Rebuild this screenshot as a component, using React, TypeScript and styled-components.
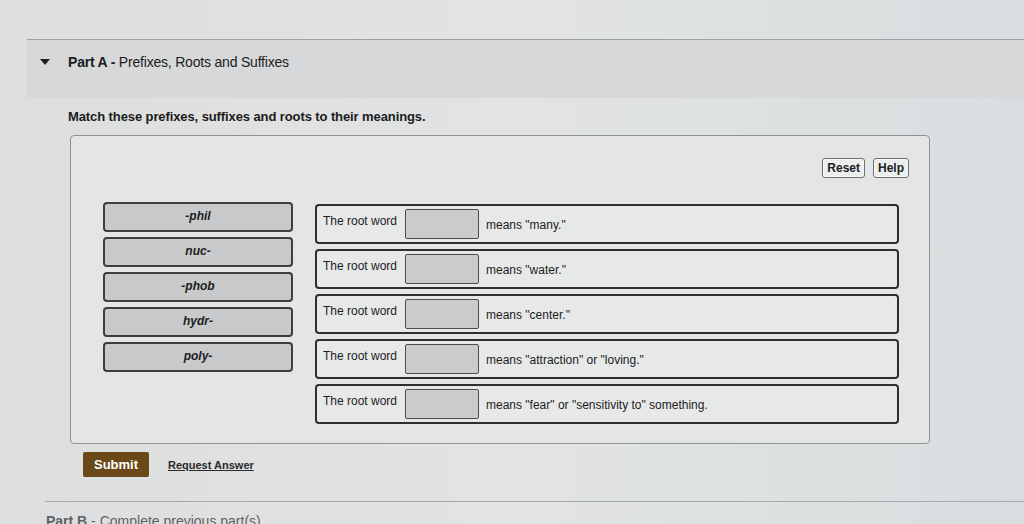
import React from "react";
import styled, { createGlobalStyle } from "styled-components";

const Global = createGlobalStyle`
  html, body { margin: 0; padding: 0; }
  body {
    width: 1024px;
    height: 524px;
    overflow: hidden;
    background: linear-gradient(90deg, #dcdedf 0%, #e2e4e4 50%, #dadddf 100%);
    font-family: "Liberation Sans", Arial, sans-serif;
    color: #1c1c1c;
  }
`;

const Page = styled.div`
  padding-top: 39px;
  display: flex;
  flex-direction: column;
`;

const PartHeader = styled.div`
  margin-left: 27px;
  height: 58px;
  border-top: 1px solid #9ea1a3;
  background: #d6d8d9;
  display: flex;
  align-items: center;
  padding-left: 13px;
  gap: 18px;
`;

const Caret = styled.span`
  width: 0;
  height: 0;
  border-left: 5px solid transparent;
  border-right: 5px solid transparent;
  border-top: 6px solid #1e1e1e;
  margin-top: -14px;
`;

const PartTitle = styled.div`
  font-size: 14px;
  margin-top: -14px;
  letter-spacing: -0.2px;
  b { font-weight: 700; }
`;

const Body = styled.div`
  padding-left: 68px;
  display: flex;
  flex-direction: column;
`;

const Instruction = styled.div`
  margin-top: 11px;
  font-size: 13px;
  font-weight: 700;
  letter-spacing: -0.1px;
`;

const Card = styled.div`
  margin-top: 11px;
  margin-left: 2px;
  width: 860px;
  height: 309px;
  box-sizing: border-box;
  border: 1px solid #8f9293;
  border-radius: 4px;
  background: #e4e6e6;
  padding: 22px 20px 0 32px;
  display: flex;
  flex-direction: column;
`;

const Toolbar = styled.div`
  display: flex;
  justify-content: flex-end;
  gap: 8px;
`;

const SmallButton = styled.button`
  font-family: "Liberation Sans", Arial, sans-serif;
  font-size: 12px;
  font-weight: 700;
  color: #222;
  background: #eceeee;
  border: 1px solid #6d7072;
  border-radius: 3px;
  height: 20px;
  padding: 0 4px;
  box-shadow: inset 0 0 0 1px #f8f8f8;
`;

const Match = styled.div`
  margin-top: 24px;
  display: flex;
  gap: 22px;
`;

const Tiles = styled.div`
  display: flex;
  flex-direction: column;
  gap: 5px;
  width: 190px;
`;

const Tile = styled.div`
  height: 30px;
  box-sizing: border-box;
  border: 2px solid #3e3e3e;
  border-radius: 4px;
  background: #c7c9ca;
  display: flex;
  justify-content: center;
  align-items: flex-start;
  padding-top: 5px;
  font-size: 12px;
  font-weight: 700;
  font-style: italic;
  color: #1d1d1d;
`;

const Rows = styled.div`
  display: flex;
  flex-direction: column;
  gap: 5px;
  width: 584px;
  margin-top: 2px;
`;

const Row = styled.div`
  height: 40px;
  box-sizing: border-box;
  border: 2px solid #2e2e2e;
  border-radius: 4px;
  background: #e7e9e9;
  display: flex;
  align-items: center;
  padding-left: 6px;
  font-size: 12px;
  color: #1c1c1c;
`;

const Lead = styled.span`
  width: 82px;
  margin-top: -6px;
`;

const DropBox = styled.div`
  width: 74px;
  height: 30px;
  box-sizing: border-box;
  border: 1px solid #4a4c4d;
  border-radius: 2px;
  background: #c9cbcc;
  margin-right: 7px;
`;

const Meaning = styled.span`
  margin-top: 2px;
`;

const Actions = styled.div`
  margin-top: 8px;
  margin-left: 15px;
  display: flex;
  align-items: center;
  gap: 19px;
`;

const Submit = styled.button`
  font-family: "Liberation Sans", Arial, sans-serif;
  font-size: 13px;
  font-weight: 700;
  color: #ffffff;
  background: #6a4817;
  border: none;
  border-radius: 2px;
  width: 66px;
  height: 25px;
`;

const RequestLink = styled.a`
  font-size: 11px;
  font-weight: 700;
  color: #2a2a2a;
  text-decoration: underline;
  cursor: pointer;
`;

const Divider = styled.div`
  margin-top: 24px;
  margin-left: 45px;
  border-top: 1px solid #a7aaac;
`;

const NextPart = styled.div`
  margin-left: 46px;
  margin-top: 11px;
  font-size: 14px;
  color: #5f6163;
  b { font-weight: 700; }
`;

const tiles = ["-phil", "nuc-", "-phob", "hydr-", "poly-"];
const meanings = [
  'means "many."',
  'means "water."',
  'means "center."',
  'means "attraction" or "loving."',
  'means "fear" or "sensitivity to" something.',
];

export default function App() {
  return (
    <>
      <Global />
      <Page>
        <PartHeader>
          <Caret />
          <PartTitle>
            <b>Part A -</b> Prefixes, Roots and Suffixes
          </PartTitle>
        </PartHeader>
        <Body>
          <Instruction>Match these prefixes, suffixes and roots to their meanings.</Instruction>
          <Card>
            <Toolbar>
              <SmallButton>Reset</SmallButton>
              <SmallButton>Help</SmallButton>
            </Toolbar>
            <Match>
              <Tiles>
                {tiles.map((t) => (
                  <Tile key={t}>{t}</Tile>
                ))}
              </Tiles>
              <Rows>
                {meanings.map((m) => (
                  <Row key={m}>
                    <Lead>The root word</Lead>
                    <DropBox />
                    <Meaning>{m}</Meaning>
                  </Row>
                ))}
              </Rows>
            </Match>
          </Card>
          <Actions>
            <Submit>Submit</Submit>
            <RequestLink>Request Answer</RequestLink>
          </Actions>
        </Body>
        <Divider />
        <NextPart>
          <b>Part B</b> - Complete previous part(s)
        </NextPart>
      </Page>
    </>
  );
}
